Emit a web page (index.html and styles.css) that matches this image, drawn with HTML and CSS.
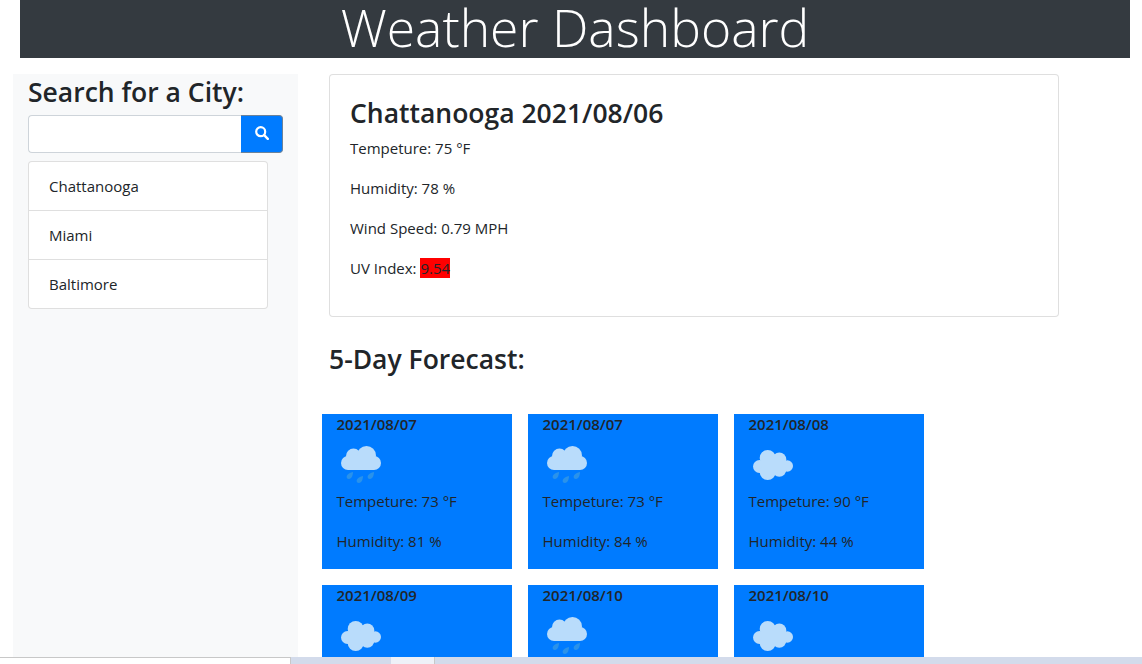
FILE: index.html
```html
<!DOCTYPE html>
<html lang="en">
<head>
<meta charset="utf-8">
<title>Weather Dashboard</title>
<link rel="stylesheet" href="styles.css">
</head>
<body>
<svg class="defs" width="0" height="0" aria-hidden="true">
  <symbol id="rain" viewBox="0 0 50 50">
    <g fill="#b9dcfb">
      <circle cx="12" cy="25" r="7"/>
      <circle cx="38" cy="25" r="7"/>
      <circle cx="17.500" cy="18" r="7.500"/>
      <circle cx="30.500" cy="17.500" r="9.500"/>
      <rect x="12" y="20" width="26" height="12"/>
    </g>
    <g fill="#2a92ea">
      <path d="M17 34c0 3-1.200 7-4 7-2 0-3-2-2-3.600C12 35.500 14.500 34.500 17 34z"/>
      <path d="M27 38c0 3-1.200 7-4 7-2 0-3-2-2-3.600C22 39.500 24.500 38.500 27 38z"/>
      <path d="M38 34c0 3-1.200 7-4 7-2 0-3-2-2-3.600C33 35.500 35.500 34.500 38 34z"/>
    </g>
  </symbol>
  <symbol id="cloud" viewBox="0 0 50 50">
    <g fill="#b9dcfb">
      <circle cx="19.700" cy="20" r="8"/>
      <circle cx="31.300" cy="21.500" r="7"/>
      <circle cx="11.500" cy="28.500" r="6.500"/>
      <circle cx="39.300" cy="28" r="5.700"/>
      <circle cx="19.700" cy="34" r="8"/>
      <circle cx="31.300" cy="31.700" r="7"/>
      <rect x="14" y="22" width="22" height="10"/>
    </g>
  </symbol>
</svg>

<header class="banner"><h1 class="banner-title">Weather Dashboard</h1></header>

<div class="layout">
  <aside class="sidebar">
    <h3 class="heading">Search for a City:</h3>
    <form class="search">
      <input class="search-input" type="text" aria-label="City">
      <button class="search-btn" type="button" aria-label="Search">
        <svg class="search-icon" width="14" height="14" viewBox="0 0 14 14"><circle cx="5.700" cy="5.700" r="4.500" fill="none" stroke="#fff" stroke-width="2.200"/><path d="M9.200 9.200l3.600 3.600" stroke="#fff" stroke-width="2.400" stroke-linecap="round"/></svg>
      </button>
    </form>
    <ul class="cities">
      <li class="city">Chattanooga</li>
      <li class="city">Miami</li>
      <li class="city">Baltimore</li>
    </ul>
  </aside>

  <main class="main">
    <section class="current">
      <h3 class="heading current-title">Chattanooga 2021/08/06</h3>
      <p class="line">Tempeture: 75 °F</p>
      <p class="line">Humidity: 78 %</p>
      <p class="line">Wind Speed: 0.79 MPH</p>
      <p class="line">UV Index: <span class="uv">9.54</span></p>
    </section>
    <h3 class="heading forecast-title">5-Day Forecast:</h3>
    <div class="forecast">
      <article class="day">
        <h6 class="day-date">2021/08/07</h6>
        <svg class="day-icon"><use href="#rain"/></svg>
        <p class="line">Tempeture: 73 °F</p>
        <p class="line">Humidity: 81 %</p>
      </article>
      <article class="day">
        <h6 class="day-date">2021/08/07</h6>
        <svg class="day-icon"><use href="#rain"/></svg>
        <p class="line">Tempeture: 73 °F</p>
        <p class="line">Humidity: 84 %</p>
      </article>
      <article class="day">
        <h6 class="day-date">2021/08/08</h6>
        <svg class="day-icon"><use href="#cloud"/></svg>
        <p class="line">Tempeture: 90 °F</p>
        <p class="line">Humidity: 44 %</p>
      </article>
      <article class="day">
        <h6 class="day-date">2021/08/09</h6>
        <svg class="day-icon"><use href="#cloud"/></svg>
      </article>
      <article class="day">
        <h6 class="day-date">2021/08/10</h6>
        <svg class="day-icon"><use href="#rain"/></svg>
      </article>
      <article class="day">
        <h6 class="day-date">2021/08/10</h6>
        <svg class="day-icon"><use href="#cloud"/></svg>
      </article>
    </div>
  </main>
</div>

<div class="tray">
  <div class="tray-blank"></div>
  <div class="tray-track">
    <div class="tray-thumb"></div>
  </div>
</div>
</body>
</html>
```
FILE: styles.css
```css
* { box-sizing: border-box; }
html, body { height: 664px; overflow: hidden; }
body {
  margin: 0;
  background: #fff;
  color: #212529;
  font-family: "Open Sans", "Noto Sans", "Liberation Sans", sans-serif;
  font-size: 15px;
  line-height: 24px;
}
.defs { position: absolute; }

.banner {
  margin: 0 12px 16px 20px;
  height: 58px;
  background: #343a40;
  color: #fff;
  text-align: center;
}
.banner-title {
  margin: 0;
  font-size: 51.600px;
  font-weight: 300;
  line-height: 54px;
}

.layout { display: flex; align-items: stretch; margin-left: 13px; }
.sidebar {
  width: 285px;
  height: 590px;
  flex: none;
  padding: 0 15px;
  background: #f8f9fa;
}
.heading {
  margin: 0 0 8px;
  font-size: 26.500px;
  font-weight: 600;
  line-height: 33px;
}
.sidebar .heading { padding-top: 2px; margin-bottom: 6px; }
.search { display: flex; height: 38px; margin-bottom: 8px; }
.search-input {
  flex: 1;
  min-width: 0;
  border: 1px solid #ced4da;
  border-right: 0;
  border-radius: 4px 0 0 4px;
  background: #fff;
}
.search-btn {
  display: flex;
  align-items: center;
  justify-content: center;
  width: 42px;
  flex: none;
  padding: 0 0 2px;
  border: 1px solid #6c8299;
  border-left: 0;
  border-radius: 0 4px 4px 0;
  background: #007bff;
}
.cities {
  width: 240px;
  margin: 0;
  padding: 0;
  list-style: none;
  background: #fff;
  border: 1px solid rgba(0,0,0,.125);
  border-radius: 4px;
}
.city { padding: 12px 20px; height: 49px; border-top: 1px solid rgba(0,0,0,.125); }
.city:first-child { border-top: 0; height: 48px; }

.main { width: 730px; margin-left: 31px; flex: none; }
.current {
  height: 243px;
  padding: 20px;
  background: #fff;
  border: 1px solid rgba(0,0,0,.125);
  border-radius: 4px;
}
.current-title { padding-top: 2px; margin-bottom: 6px; }
.line { margin: 0 0 16px; }
.uv { background: #f00; }
.forecast-title { margin: 26px 0 38px; }
.forecast {
  display: grid;
  grid-template-columns: repeat(3, 190px);
  grid-template-rows: 155px 79px;
  gap: 16px;
  margin-left: -7px;
}
.day {
  padding: 0 14.500px;
  background: #007bff;
  overflow: hidden;
}
.day-date {
  margin: 0;
  font-size: 15px;
  font-weight: 600;
  line-height: 21px;
}
.day-icon { display: block; width: 50px; height: 50px; margin: 3px 0 1px -1px; }

.tray {
  position: fixed;
  left: 0;
  right: 0;
  bottom: 0;
  height: 7px;
  display: flex;
}
.tray-blank { width: 291px; background: #fff; border-top: 1px solid #c8c8c8; border-right: 1px solid #c8c8c8; }
.tray-track { flex: 1; padding-left: 100px; background: #d3dbeb; }
.tray-thumb { width: 44px; height: 100%; background: #eef1f8; border-right: 1px solid #c8c8c8; }
```
